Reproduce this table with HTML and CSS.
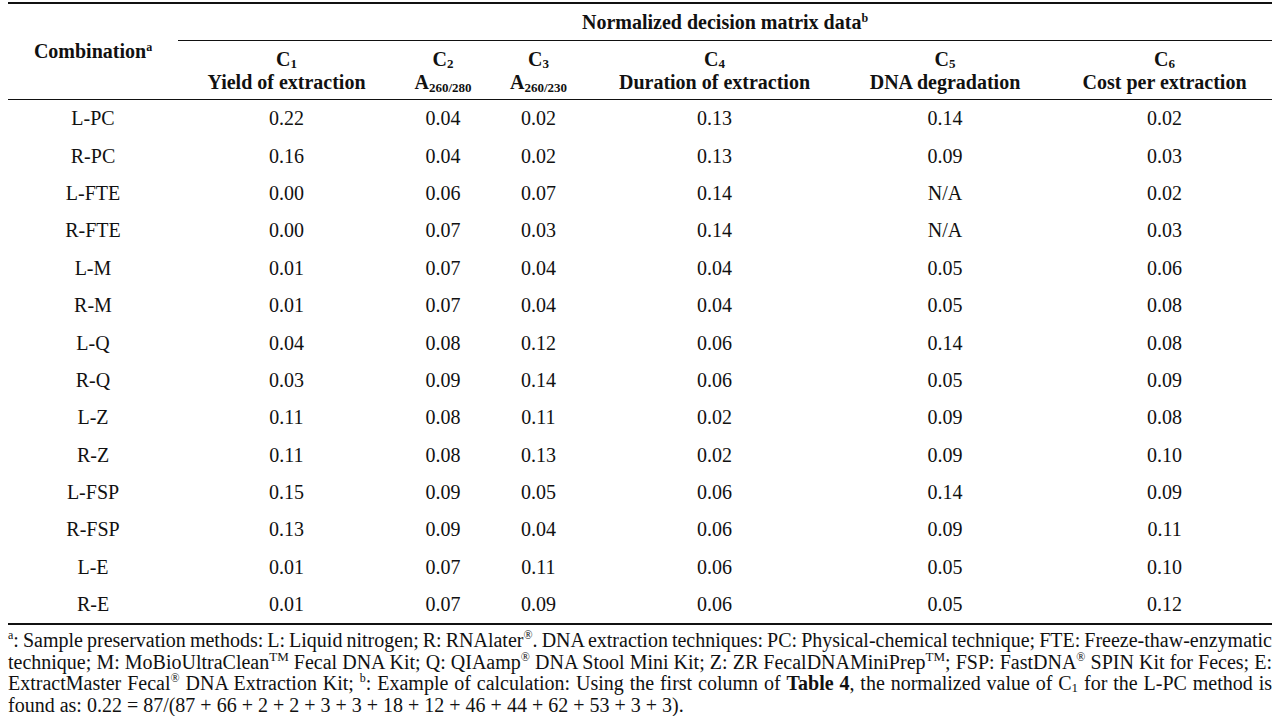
FILE: index.html
```html
<!DOCTYPE html>
<html lang="en">
<head>
<meta charset="utf-8">
<title>Normalized decision matrix data</title>
<link rel="stylesheet" href="styles.css">
</head>
<body>
<div class="page">
  <table class="matrix">
    <colgroup>
      <col class="w0"><col class="w1"><col class="w2"><col class="w3"><col class="w4"><col class="w5"><col class="w6">
    </colgroup>
    <thead>
      <tr class="h1">
        <th rowspan="2" class="combo">Combination<sup>a</sup></th>
        <th colspan="6" class="group">Normalized decision matrix data<sup>b</sup></th>
      </tr>
      <tr class="h2">
        <th>C<sub>1</sub><br>Yield of extraction</th>
        <th>C<sub>2</sub><br>A<sub class="ab">260/280</sub></th>
        <th>C<sub>3</sub><br>A<sub class="ab">260/230</sub></th>
        <th>C<sub>4</sub><br>Duration of extraction</th>
        <th>C<sub>5</sub><br>DNA degradation</th>
        <th class="last">C<sub>6</sub><br>Cost per extraction</th>
      </tr>
    </thead>
    <tbody>
      <tr><td>L-PC</td><td>0.22</td><td>0.04</td><td>0.02</td><td>0.13</td><td>0.14</td><td class="last">0.02</td></tr>
      <tr><td>R-PC</td><td>0.16</td><td>0.04</td><td>0.02</td><td>0.13</td><td>0.09</td><td class="last">0.03</td></tr>
      <tr><td>L-FTE</td><td>0.00</td><td>0.06</td><td>0.07</td><td>0.14</td><td>N/A</td><td class="last">0.02</td></tr>
      <tr><td>R-FTE</td><td>0.00</td><td>0.07</td><td>0.03</td><td>0.14</td><td>N/A</td><td class="last">0.03</td></tr>
      <tr><td>L-M</td><td>0.01</td><td>0.07</td><td>0.04</td><td>0.04</td><td>0.05</td><td class="last">0.06</td></tr>
      <tr><td>R-M</td><td>0.01</td><td>0.07</td><td>0.04</td><td>0.04</td><td>0.05</td><td class="last">0.08</td></tr>
      <tr><td>L-Q</td><td>0.04</td><td>0.08</td><td>0.12</td><td>0.06</td><td>0.14</td><td class="last">0.08</td></tr>
      <tr><td>R-Q</td><td>0.03</td><td>0.09</td><td>0.14</td><td>0.06</td><td>0.05</td><td class="last">0.09</td></tr>
      <tr><td>L-Z</td><td>0.11</td><td>0.08</td><td>0.11</td><td>0.02</td><td>0.09</td><td class="last">0.08</td></tr>
      <tr><td>R-Z</td><td>0.11</td><td>0.08</td><td>0.13</td><td>0.02</td><td>0.09</td><td class="last">0.10</td></tr>
      <tr><td>L-FSP</td><td>0.15</td><td>0.09</td><td>0.05</td><td>0.06</td><td>0.14</td><td class="last">0.09</td></tr>
      <tr><td>R-FSP</td><td>0.13</td><td>0.09</td><td>0.04</td><td>0.06</td><td>0.09</td><td class="last">0.11</td></tr>
      <tr><td>L-E</td><td>0.01</td><td>0.07</td><td>0.11</td><td>0.06</td><td>0.05</td><td class="last">0.10</td></tr>
      <tr><td>R-E</td><td>0.01</td><td>0.07</td><td>0.09</td><td>0.06</td><td>0.05</td><td class="last">0.12</td></tr>
    </tbody>
  </table>
  <div class="notes">
    <p class="line"><sup>a</sup>: Sample preservation methods: L: Liquid nitrogen; R: RNAlater<sup>®</sup>. DNA extraction techniques: PC: Physical-chemical technique; FTE: Freeze-thaw-enzymatic</p>
    <p class="line">technique; M: MoBioUltraClean<sup class="tm">TM</sup> Fecal DNA Kit; Q: QIAamp<sup>®</sup> DNA Stool Mini Kit; Z: ZR FecalDNAMiniPrep<sup class="tm">TM</sup>; FSP: FastDNA<sup>®</sup> SPIN Kit for Feces; E:</p>
    <p class="line">ExtractMaster Fecal<sup>®</sup> DNA Extraction Kit; <sup>b</sup>: Example of calculation: Using the first column of <b>Table 4</b>, the normalized value of C<sub>1</sub> for the L-PC method is</p>
    <p class="line end">found as: 0.22 = 87/(87 + 66 + 2 + 2 + 3 + 3 + 18 + 12 + 46 + 44 + 62 + 53 + 3 + 3).</p>
  </div>
</div>
</body>
</html>
```

FILE: styles.css
```css
html, body {
  margin: 0;
  padding: 0;
  background: #ffffff;
}

body {
  color: #111111;
  font-family: "Liberation Serif", "Times New Roman", serif;
}

.page {
  padding: 2px 8px 0;
}

.matrix {
  width: 1264px;
  table-layout: fixed;
  border-collapse: separate;
  border-spacing: 0;
  border-top: 2px solid #111111;
}

.w0 { width: 170px; }
.w1 { width: 217px; }
.w2 { width: 96px; }
.w3 { width: 95px; }
.w4 { width: 257px; }
.w5 { width: 204px; }
.w6 { width: 225px; }

.matrix th,
.matrix td {
  padding: 0;
  text-align: center;
  vertical-align: middle;
}

.matrix th {
  font-size: 20px;
  font-weight: bold;
  line-height: 23px;
}

.h1 th {
  height: 36px;
}

.group {
  border-bottom: 1px solid #111111;
}

.combo {
  border-bottom: 1px solid #111111;
  padding-bottom: 10px;
}

.h2 th {
  height: 56px;
  padding-top: 2px;
  border-bottom: 1px solid #111111;
}

.matrix td {
  font-size: 20px;
  line-height: 23px;
  height: 37.4px;
}

.matrix tbody tr:last-child td {
  border-bottom: 2px solid #111111;
}

.matrix .last {
  padding-left: 10px;
}

.matrix sup {
  font-size: 12px;
  line-height: 0;
  vertical-align: 7px;
}

.matrix sub {
  font-size: 13px;
  line-height: 0;
  vertical-align: -2px;
}

.matrix sub.ab {
  vertical-align: -3px;
}

.notes {
  margin-top: 5px;
}

.line {
  margin: 0;
  font-size: 20px;
  line-height: 21.5px;
  text-align: justify;
  text-align-last: justify;
  white-space: nowrap;
  word-spacing: -2.5px;
}

.line.end {
  text-align-last: left;
  word-spacing: 0;
}

.line sup {
  font-size: 12px;
  line-height: 0;
  vertical-align: 8px;
}

.line sup.tm {
  font-size: 13px;
}

.line sub {
  font-size: 13px;
  line-height: 0;
  vertical-align: -2px;
}
```
